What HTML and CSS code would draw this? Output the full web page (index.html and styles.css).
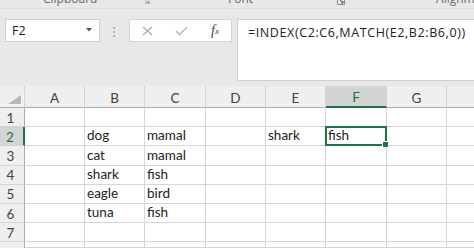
FILE: index.html
```html
<!DOCTYPE html>
<html lang="en">
<head>
    <meta charset="UTF-8">
    <title>Excel INDEX MATCH</title>
    <link rel="stylesheet" href="styles.css">
</head>
<body>

    <!-- Ribbon group labels (cut off at top) -->
    <div class="ribbon">
        <div class="group group-clip">
            <span class="label">Clipboard</span>
            <svg class="launcher" width="8" height="6" viewBox="0 0 8 6">
                <path d="M0.5 0 V5.5 H7.5 V0" fill="none" stroke="#8a8a8a" stroke-width="1"/>
                <path d="M3 1 L6 4 M6 2 V4 H4" fill="none" stroke="#555" stroke-width="1"/>
            </svg>
        </div>
        <div class="group group-font">
            <span class="label">Font</span>
            <svg class="launcher" width="8" height="6" viewBox="0 0 8 6">
                <path d="M0.5 0 V5.5 H7.5 V0" fill="none" stroke="#8a8a8a" stroke-width="1"/>
                <path d="M3 1 L6 4 M6 2 V4 H4" fill="none" stroke="#555" stroke-width="1"/>
            </svg>
        </div>
        <div class="group group-align">
            <span class="label">Alignment</span>
        </div>
    </div>

    <!-- Name box + formula bar -->
    <div class="formula-row">
        <div class="name-box">
            <span>F2</span>
            <svg width="6" height="4" viewBox="0 0 6 4"><path d="M0 0 H6 L3 3.5 Z" fill="#555"/></svg>
        </div>
        <div class="dots"><i></i><i></i><i></i></div>
        <div class="fx-buttons">
            <svg width="11" height="10" viewBox="0 0 11 10">
                <path d="M1 1 L10 9 M10 1 L1 9" stroke="#a9a9a9" stroke-width="1.2" fill="none"/>
            </svg>
            <svg width="13" height="10" viewBox="0 0 13 10">
                <path d="M1 5 L4.5 8.5 L12 1" stroke="#b3b3b3" stroke-width="1.4" fill="none"/>
            </svg>
            <span class="fx">f<sub>x</sub></span>
        </div>
        <div class="formula">=INDEX(C2:C6,MATCH(E2,B2:B6,0))</div>
    </div>

    <!-- Worksheet grid -->
    <div class="sheet">
        <div class="hdr corner"><svg width="13" height="9" viewBox="0 0 13 9"><path d="M13 0 V9 H0 Z" fill="#b7b7b7"/></svg></div>
        <div class="hdr col">A</div>
        <div class="hdr col">B</div>
        <div class="hdr col">C</div>
        <div class="hdr col">D</div>
        <div class="hdr col">E</div>
        <div class="hdr col sel">F</div>
        <div class="hdr col">G</div>
        <div class="hdr col last"></div>

        <div class="hdr row">1</div>
        <div class="cell"></div><div class="cell"></div><div class="cell"></div><div class="cell"></div><div class="cell"></div><div class="cell"></div><div class="cell"></div><div class="cell"></div>

        <div class="hdr row sel">2</div>
        <div class="cell"></div><div class="cell">dog</div><div class="cell">mamal</div><div class="cell"></div><div class="cell">shark</div><div class="cell active">fish</div><div class="cell"></div><div class="cell"></div>

        <div class="hdr row">3</div>
        <div class="cell"></div><div class="cell">cat</div><div class="cell">mamal</div><div class="cell"></div><div class="cell"></div><div class="cell"></div><div class="cell"></div><div class="cell"></div>

        <div class="hdr row">4</div>
        <div class="cell"></div><div class="cell">shark</div><div class="cell">fish</div><div class="cell"></div><div class="cell"></div><div class="cell"></div><div class="cell"></div><div class="cell"></div>

        <div class="hdr row">5</div>
        <div class="cell"></div><div class="cell">eagle</div><div class="cell">bird</div><div class="cell"></div><div class="cell"></div><div class="cell"></div><div class="cell"></div><div class="cell"></div>

        <div class="hdr row">6</div>
        <div class="cell"></div><div class="cell">tuna</div><div class="cell">fish</div><div class="cell"></div><div class="cell"></div><div class="cell"></div><div class="cell"></div><div class="cell"></div>

        <div class="hdr row">7</div>
        <div class="cell"></div><div class="cell"></div><div class="cell"></div><div class="cell"></div><div class="cell"></div><div class="cell"></div><div class="cell"></div><div class="cell"></div>

        <div class="hdr row short"></div>
        <div class="cell"></div><div class="cell"></div><div class="cell"></div><div class="cell"></div><div class="cell"></div><div class="cell"></div><div class="cell"></div><div class="cell"></div>
    </div>

</body>
</html>
```

FILE: styles.css
```css
/* Reset */
* {
    margin: 0;
    padding: 0;
    box-sizing: border-box;
}

body {
    width: 474px;
    height: 248px;
    overflow: hidden;
    background-color: #e8e8e8;
    font-family: 'Open Sans', 'Noto Sans', sans-serif;
    color: #222;
}

/* Ribbon labels */
.ribbon {
    height: 9px;
    display: flex;
    overflow: hidden;
    border-bottom: 1px solid #dadada;
}

.group {
    display: flex;
    align-items: flex-start;
    height: 9px;
}

.group .label {
    font-size: 12px;
    line-height: 12px;
    color: #6a6a6a;
    margin-top: -7px;
}

.group-clip {
    width: 150px;
    padding-left: 43px;
}

.group-font {
    width: 196px;
    padding-left: 78px;
}

.group-align {
    padding-left: 91px;
}

.launcher {
    margin-top: -1px;
}

.group-clip .launcher {
    margin-left: 48px;
}

.group-font .launcher {
    margin-left: 84px;
}

/* Formula row */
.formula-row {
    display: flex;
    align-items: flex-start;
    margin-top: 10px;
    height: 67px;
}

.name-box {
    width: 95px;
    height: 23px;
    margin-left: 5px;
    background: #fff;
    border: 1px solid #cfcfcf;
    display: flex;
    align-items: center;
    justify-content: space-between;
    padding: 0 7px 0 6px;
    font-size: 12.5px;
}

.name-box svg {
    margin-top: -2px;
}

.dots {
    width: 29px;
    display: flex;
    flex-direction: column;
    align-items: center;
    gap: 2px;
    padding-top: 8px;
    padding-right: 1px;
}

.dots i {
    display: block;
    width: 2px;
    height: 2px;
    background: #b5b5b5;
}

.fx-buttons {
    width: 103px;
    height: 23px;
    background: #fff;
    border: 1px solid #d6d6d6;
    display: flex;
    align-items: center;
    padding-left: 12px;
    gap: 22px;
}

.fx {
    font-family: 'Liberation Serif', serif;
    font-style: italic;
    font-size: 14px;
    color: #444;
    margin-left: 1px;
}

.fx sub {
    font-size: 9px;
    vertical-align: 1px;
}

.formula {
    flex: 1;
    margin-left: 5px;
    height: 62px;
    background: #fff;
    border: 1px solid #cfcfcf;
    border-right: none;
    padding: 4px 0 0 10px;
    font-size: 12.5px;
    letter-spacing: 0.6px;
    line-height: 18px;
    white-space: nowrap;
}

/* Worksheet */
.sheet {
    display: grid;
    grid-template-columns: 25px 60px 60px 61px 60px 60px 61px 60px 40px;
    grid-template-rows: 22px repeat(7, 19.2px) 6px;
    background: #fff;
    font-family: 'Lato', sans-serif;
    font-size: 13.5px;
}

.hdr {
    background: #efefef;
    color: #444;
    display: flex;
    align-items: center;
    justify-content: center;
}

.hdr.col {
    border-right: 1px solid #d3d3d3;
    border-bottom: 1px solid #ababab;
    padding-top: 2px;
}

.hdr.col.sel {
    background: #d4d4d4;
    color: #217346;
    border-bottom: 2px solid #217346;
}

.hdr.corner {
    border-right: 1px solid #d3d3d3;
    border-bottom: 1px solid #ababab;
    align-items: flex-end;
    justify-content: flex-end;
    padding: 0 3px 3px 0;
}

.hdr.row {
    border-right: 1px solid #ababab;
    border-bottom: 1px solid #d3d3d3;
    padding-right: 3px;
    padding-top: 1px;
}

.hdr.row.short {
    border-bottom: none;
}

.hdr.row.sel {
    background: #d4d4d4;
    color: #217346;
    border-right: 2px solid #217346;
}

.cell {
    border-right: 1px solid #d6d6d6;
    border-bottom: 1px solid #d6d6d6;
    padding: 0 2px 2px 2px;
    display: flex;
    align-items: flex-end;
    line-height: 15px;
    white-space: nowrap;
}

.cell.active {
    position: relative;
}

.cell.active::before {
    content: "";
    position: absolute;
    left: -1px;
    top: -1px;
    right: -1px;
    bottom: -1px;
    border: 2px solid #217346;
}

.cell.active::after {
    content: "";
    position: absolute;
    right: -3px;
    bottom: -3px;
    width: 5px;
    height: 5px;
    background: #217346;
    border: 1px solid #fff;
}
```
